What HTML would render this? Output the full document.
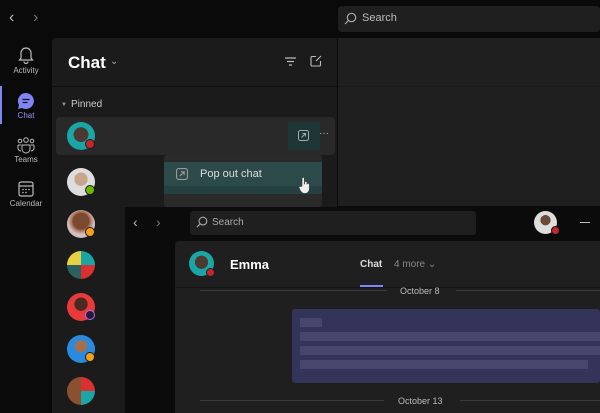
<!DOCTYPE html>
<html><head><style>
*{margin:0;padding:0;box-sizing:border-box}
body{width:600px;height:413px;background:#0a0a0a;font-family:"Liberation Sans",sans-serif;position:relative;overflow:hidden;color:#ddd}
.a{position:absolute}
.av{position:absolute;width:28px;height:28px;border-radius:50%;overflow:hidden}
.st{position:absolute;width:10px;height:10px;border-radius:50%;border:1.5px solid #1b1b1b}
.lbl{font-size:8px;color:#bbb;text-align:center;width:52px;left:0}
</style></head><body>
<div class="a" style="left:9px;top:9px;color:#bbb;font-size:16px">&#8249;</div>
<div class="a" style="left:33px;top:9px;color:#777;font-size:16px">&#8250;</div>
<div class="a" style="left:338px;top:6px;width:262px;height:26px;background:#1f1f1f;border-radius:4px"></div>
<svg class="a" style="left:344px;top:12px" width="13" height="13" viewBox="0 0 13 13"><circle cx="7.5" cy="5.5" r="4.2" fill="none" stroke="#aaa" stroke-width="1.2"/><path d="M4.5 8.5L1 12" stroke="#aaa" stroke-width="1.2"/></svg>
<div class="a" style="left:362px;top:12px;font-size:11px;color:#bbb">Search</div>
<svg class="a" style="left:18px;top:46px" width="16" height="18" viewBox="0 0 16 18"><path d="M3 12V7a5 5 0 0110 0v5l1.5 2H1.5z M6 15.5a2 2 0 004 0" fill="none" stroke="#bbb" stroke-width="1.2"/></svg>
<div class="a lbl" style="top:66px">Activity</div>
<div class="a" style="left:0;top:86px;width:2px;height:38px;background:#7f85f5"></div>
<svg class="a" style="left:17px;top:92px" width="18" height="18" viewBox="0 0 18 18"><path d="M9 1a8 8 0 11-4 15L1 17l1-4A8 8 0 019 1z" fill="#7f85f5"/><path d="M5.5 7.5h7M5.5 10.5h5" stroke="#111" stroke-width="1.2"/></svg>
<div class="a lbl" style="top:111px;color:#8f94f8">Chat</div>
<svg class="a" style="left:16px;top:136px" width="20" height="18" viewBox="0 0 20 18"><circle cx="10" cy="4" r="2.3" fill="none" stroke="#bbb"/><circle cx="4" cy="5" r="1.8" fill="none" stroke="#bbb"/><circle cx="16" cy="5" r="1.8" fill="none" stroke="#bbb"/><path d="M6 9h8v4a4 4 0 01-8 0z M2 9h3M15 9h3M2 9v3a3 3 0 003 3M18 9v3a3 3 0 01-3 3" fill="none" stroke="#bbb"/></svg>
<div class="a lbl" style="top:155px">Teams</div>
<svg class="a" style="left:18px;top:181px" width="16" height="16" viewBox="0 0 16 16"><rect x="1" y="1" width="14" height="14" rx="2" fill="none" stroke="#bbb" stroke-width="1.2"/><path d="M1 5h14" stroke="#bbb" stroke-width="1.2"/><circle cx="5" cy="8.5" r=".8" fill="#bbb"/><circle cx="8" cy="8.5" r=".8" fill="#bbb"/><circle cx="11" cy="8.5" r=".8" fill="#bbb"/><circle cx="5" cy="11.5" r=".8" fill="#bbb"/><circle cx="8" cy="11.5" r=".8" fill="#bbb"/></svg>
<div class="a lbl" style="top:199px">Calendar</div>
<div class="a" style="left:52px;top:38px;width:285px;height:375px;background:#1b1b1b;border-radius:4px 0 0 0"></div>
<div class="a" style="left:52px;top:86px;width:285px;height:1px;background:#0e0e0e"></div>
<div class="a" style="left:68px;top:53px;font-size:17px;font-weight:bold;color:#fff">Chat</div>
<div class="a" style="left:110px;top:56px;font-size:10px;color:#aaa">&#8964;</div>
<svg class="a" style="left:284px;top:56px" width="13" height="11" viewBox="0 0 13 11"><path d="M1 2h11M3 5.5h7M5 9h3" stroke="#bbb" stroke-width="1.2"/></svg>
<svg class="a" style="left:310px;top:55px" width="12" height="12" viewBox="0 0 12 12"><path d="M6 1.5H2a1 1 0 00-1 1V10a1 1 0 001 1h7.5a1 1 0 001-1V6M11 1L6 6" fill="none" stroke="#bbb" stroke-width="1.1"/></svg>
<div class="a" style="left:61px;top:102px;font-size:6px;color:#999">&#9660;</div>
<div class="a" style="left:71px;top:99px;font-size:10px;color:#ccc">Pinned</div>
<div class="a" style="left:56px;top:117px;width:279px;height:38px;background:#292929;border-radius:4px"></div>
<div class="a" style="left:288px;top:122px;width:32px;height:28px;background:#1f3636"></div>
<svg class="a" style="left:298px;top:130px" width="11" height="11" viewBox="0 0 11 11"><rect x=".5" y=".5" width="10" height="10" rx="2" fill="none" stroke="#aaa"/><path d="M3.5 7.5L7.5 3.5M4.5 3.5h3v3" fill="none" stroke="#aaa"/></svg>
<div class="a" style="left:319px;top:128px;font-size:10px;color:#bbb">···</div>
<div class="av" style="left:67px;top:122px;background:radial-gradient(circle at 50% 45%,#4a3a30 0 35%,#1aa6a6 36%)"></div><div class="st" style="left:85px;top:139px;background:#c4262e"></div>
<div class="av" style="left:67px;top:168px;background:radial-gradient(circle at 50% 40%,#c9a48a 0 30%,#ddd 31%)"></div><div class="st" style="left:85px;top:185px;background:#6bb700"></div>
<div class="av" style="left:67px;top:210px;background:radial-gradient(circle at 50% 40%,#7a4a30 0 38%,#a06040 39%,#d0c0c0 60%)"></div><div class="st" style="left:85px;top:227px;background:#f8a01c;border-color:#1b1b1b"></div>
<div class="av" style="left:67px;top:251px;background:conic-gradient(#1aa6a6 0 25%,#d93030 25% 50%,#2a6060 50% 75%,#e8d040 75%)"></div>
<div class="av" style="left:67px;top:293px;background:radial-gradient(circle at 50% 40%,#4a2a20 0 30%,#e83a3a 31%)"></div><div class="st" style="left:85px;top:310px;background:#2a1a3a;border-color:#b070e0"></div>
<div class="av" style="left:67px;top:335px;background:radial-gradient(circle at 50% 40%,#a07050 0 28%,#2a8ae0 29%)"></div><div class="st" style="left:85px;top:352px;background:#f8a01c"></div>
<div class="av" style="left:67px;top:377px;background:conic-gradient(#d93030 0 25%,#1aa6a6 25% 50%,#8a5030 50%)"></div>
<div class="a" style="left:338px;top:38px;width:262px;height:168px;background:#1f1f1f"></div>
<div class="a" style="left:338px;top:86px;width:262px;height:1px;background:#1a1a1a"></div>
<div class="a" style="left:164px;top:155px;width:158px;height:52px;background:#2a2a2a;border-radius:3px"></div>
<div class="a" style="left:164px;top:162px;width:158px;height:32px;background:#2d4a4a"></div>
<div class="a" style="left:164px;top:186px;width:158px;height:8px;background:#244040"></div>
<svg class="a" style="left:176px;top:168px" width="12" height="12" viewBox="0 0 11 11"><rect x=".5" y=".5" width="10" height="10" rx="2" fill="none" stroke="#999"/><path d="M3.5 7.5L7.5 3.5M4.5 3.5h3v3" fill="none" stroke="#999"/></svg>
<div class="a" style="left:200px;top:168px;font-size:11px;color:#ddd">Pop out chat</div>
<svg class="a" style="left:298px;top:176px" width="14" height="18" viewBox="0 0 14 18"><path d="M4 10V2.5a1.2 1.2 0 012.4 0V8h.2V6.5a1.2 1.2 0 012.4 0V8.5a1.2 1.2 0 012.4 0V13c0 2.5-2 4.5-4.5 4.5S3 16 2 14L1 11.5a1 1 0 011.8-.8z" fill="#eee" stroke="#333" stroke-width=".6"/></svg>
<div class="a" style="left:125px;top:207px;width:475px;height:206px;background:#0b0b0b"></div>
<div class="a" style="left:133px;top:214px;color:#bbb;font-size:14px">&#8249;</div>
<div class="a" style="left:156px;top:214px;color:#777;font-size:14px">&#8250;</div>
<div class="a" style="left:190px;top:211px;width:286px;height:24px;background:#1f1f1f;border-radius:3px"></div>
<svg class="a" style="left:196px;top:216px" width="12" height="12" viewBox="0 0 13 13"><circle cx="7.5" cy="5.5" r="4.2" fill="none" stroke="#aaa" stroke-width="1.2"/><path d="M4.5 8.5L1 12" stroke="#aaa" stroke-width="1.2"/></svg>
<div class="a" style="left:212px;top:217px;font-size:10px;color:#aaa">Search</div>
<div class="av" style="left:534px;top:211px;width:23px;height:23px;background:radial-gradient(circle at 50% 40%,#6a4a3a 0 28%,#ddd 29%)"></div><div class="st" style="left:551px;top:226px;width:9px;height:9px;background:#c4262e;border-color:#0b0b0b"></div>
<div class="a" style="left:580px;top:222px;width:10px;height:1px;background:#bbb"></div>
<div class="a" style="left:175px;top:241px;width:425px;height:172px;background:#1f1f1f;border-radius:4px 0 0 0"></div>
<div class="a" style="left:175px;top:287px;width:425px;height:1px;background:#151515"></div>
<div class="av" style="left:189px;top:251px;width:25px;height:25px;background:radial-gradient(circle at 50% 45%,#4a3a30 0 35%,#1aa6a6 36%)"></div><div class="st" style="left:206px;top:268px;width:9px;height:9px;background:#c4262e;border-color:#1f1f1f"></div>
<div class="a" style="left:230px;top:257px;font-size:13px;font-weight:bold;color:#fff">Emma</div>
<div class="a" style="left:360px;top:259px;font-size:10px;font-weight:bold;color:#ddd">Chat</div>
<div class="a" style="left:360px;top:285px;width:23px;height:2px;background:#7f85f5"></div>
<div class="a" style="left:394px;top:259px;font-size:10px;color:#888">4 more &#8964;</div>
<div class="a" style="left:200px;top:290px;width:187px;height:1px;background:#3a3a3a"></div>
<div class="a" style="left:400px;top:286px;font-size:9px;color:#bbb">October 8</div>
<div class="a" style="left:456px;top:290px;width:144px;height:1px;background:#3a3a3a"></div>
<div class="a" style="left:292px;top:309px;width:308px;height:74px;background:#34345a;border-radius:3px"></div>
<div class="a" style="left:300px;top:318px;width:22px;height:9px;background:#47476e"></div>
<div class="a" style="left:300px;top:332px;width:300px;height:9px;background:#47476e"></div>
<div class="a" style="left:300px;top:346px;width:300px;height:9px;background:#47476e"></div>
<div class="a" style="left:300px;top:360px;width:288px;height:9px;background:#47476e"></div>
<div class="a" style="left:200px;top:400px;width:184px;height:1px;background:#3a3a3a"></div>
<div class="a" style="left:398px;top:396px;font-size:9px;color:#bbb">October 13</div>
<div class="a" style="left:460px;top:400px;width:140px;height:1px;background:#3a3a3a"></div>
</body></html>
